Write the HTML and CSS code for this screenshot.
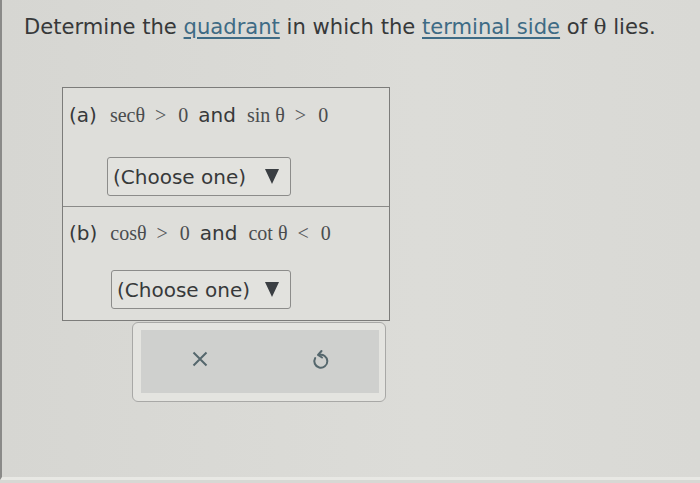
FILE: index.html
```html
<!DOCTYPE html>
<html>
<head>
<meta charset="utf-8">
<link rel="stylesheet" href="styles.css">
</head>
<body>
<div class="page">
  <p class="title">Determine the <span class="link">quadrant</span> in which the <span class="link">terminal side</span> of <span class="theta">θ</span> lies.</p>
  <div class="box">
    <div class="part part-a">
      <div class="q"><span class="lbl">(a)</span><span class="m">secθ</span><span class="op">&gt;</span><span class="m">0</span><span class="and">and</span><span class="m">sin θ</span><span class="op">&gt;</span><span class="m">0</span></div>
      <div class="sel sel-a"><span>(Choose one)</span><span class="tri"></span></div>
    </div>
    <div class="part part-b">
      <div class="q"><span class="lbl">(b)</span><span class="m">cosθ</span><span class="op">&gt;</span><span class="m">0</span><span class="and">and</span><span class="m">cot θ</span><span class="op">&lt;</span><span class="m">0</span></div>
      <div class="sel sel-b"><span>(Choose one)</span><span class="tri"></span></div>
    </div>
  </div>
  <div class="actions">
    <div class="inner">
      <svg class="ic ic-x" width="18" height="18" viewBox="0 0 18 18"><path d="M2.5 2.5 L15.5 15.5 M15.5 2.5 L2.5 15.5" stroke="#55676d" stroke-width="2" fill="none"/></svg>
      <svg class="ic ic-u" width="18" height="22" viewBox="0 0 18 22"><path d="M7 7 A6.5 6.5 0 1 1 3.2 10" stroke="#55676d" stroke-width="2" fill="none" stroke-linecap="round"/><path d="M9.5 3 L6 7 L10 9.5" stroke="#55676d" stroke-width="2" fill="none" stroke-linecap="round" stroke-linejoin="round"/></svg>
    </div>
  </div>
</div>
</body>
</html>
```
FILE: styles.css
```css
html, body { margin: 0; padding: 0; }
body {
  width: 700px; height: 483px; overflow: hidden;
  background: #d8d8d4;
  font-family: "DejaVu Sans", Verdana, sans-serif;
  color: #37393a;
}
.page {
  height: 480px;
  border-left: 2px solid #8a8a88;
  border-bottom: 3px solid #e8e8e4;
  box-sizing: border-box;
  padding: 13px 0 0 22px;
  background: linear-gradient(90deg, #d6d6d2 0%, #dcdcd8 60%, #d9d9d5 100%);
}
.title { margin: 0; font-size: 21.1px; line-height: 28px; }
.link { color: #3e6b85; text-decoration: underline; text-underline-offset: 3px; text-decoration-thickness: 1.5px; }
.theta { font-family: "DejaVu Serif", serif; }
.box {
  margin: 46px 0 0 38px;
  width: 326px;
  border: 1.5px solid #7c7c7a;
  background: #dededa;
}
.part { padding: 14px 0 0 6px; }
.part-a { height: 104px; border-bottom: 1.5px solid #8a8a88; }
.part-b { height: 100px; padding-top: 13px; }
.q { font-size: 20px; line-height: 26px; display: flex; align-items: baseline; white-space: pre; }
.lbl { margin-right: 13px; }
.m { font-family: "Liberation Serif", "Times New Roman", serif; font-size: 20px; color: #4a4c4e; }
.op { font-family: "Liberation Serif", "Times New Roman", serif; font-size: 20px; margin: 0 12px 0 10px; color: #55585a; }
.and { margin: 0 11px 0 10px; }
.sel {
  display: flex; align-items: center; justify-content: space-between;
  box-sizing: border-box; height: 39px;
  border: 1.5px solid #8c8c8a; border-radius: 3px;
  background: #e2e2de;
  font-size: 20px; padding: 0 11px 0 5px;
}
.sel-a { width: 184px; margin: 29px 0 0 38px; }
.sel-b { width: 180px; margin: 24px 0 0 42px; }
.tri { width: 0; height: 0; border-left: 7px solid transparent; border-right: 7px solid transparent; border-top: 15px solid #3a3e42; }
.actions {
  margin: 1px 0 0 108px;
  width: 254px; height: 80px; box-sizing: border-box;
  border: 1.5px solid #a8a8a6; border-radius: 6px;
  background: #e4e4e0;
  padding: 7px 6px 8px 8px;
}
.inner {
  height: 100%;
  box-sizing: border-box;
  padding-bottom: 6px;
  background: #cfd0ce;
  display: flex; align-items: center;
}
.ic { display: block; }
.ic-x { margin-left: 50px; }
.ic-u { margin-left: 103px; }
```
